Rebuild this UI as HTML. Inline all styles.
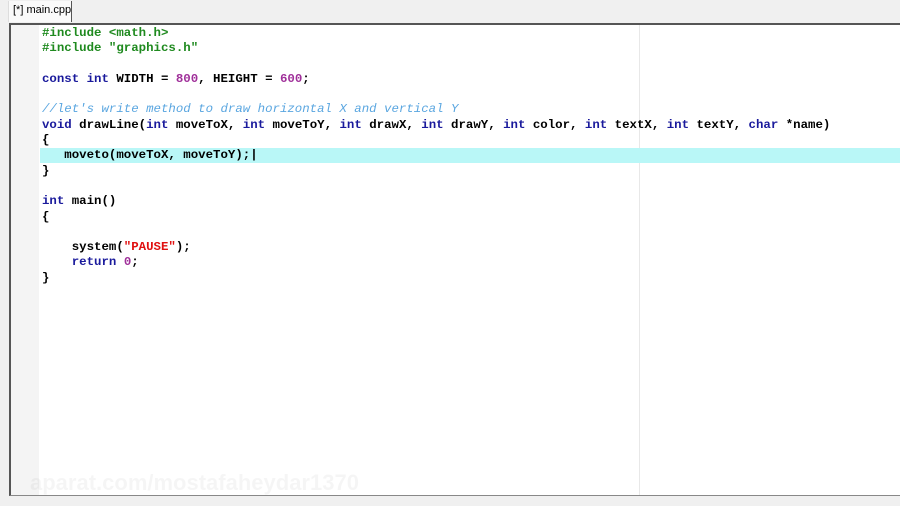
<!DOCTYPE html>
<html><head><style>
body{margin:0;width:900px;height:506px;background:#f0f0f0;position:relative;overflow:hidden;font-family:"Liberation Mono",monospace;}
.tab{position:absolute;left:8px;top:1px;height:21px;width:64px;background:#fafafa;border-right:1px solid #555;border-left:1px solid #ddd;font:11px "Liberation Sans",sans-serif;line-height:19px;padding-left:4px;box-sizing:border-box;color:#000;white-space:nowrap}
.ed{position:absolute;left:9px;top:23px;width:900px;height:470px;background:#fff;border-top:2px solid #555;border-left:2px solid #555;border-bottom:1px solid #888}
.gut{position:absolute;left:0;top:0;width:28px;height:100%;background:#f4f4f4}
.margin{position:absolute;left:628px;top:0;height:100%;width:1px;background:#e8e8e8}
.hl{position:absolute;left:29px;top:123px;width:880px;height:15px;background:#b9f7f7}
pre{position:absolute;left:31px;top:1px;margin:0;font:bold 12.4px/15.3px "Liberation Mono",monospace;color:#000}
.k{color:#1a1a9c}.p{color:#1f8a1f}.n{color:#a0309a}.c{color:#5aa6e0;font-style:italic;font-weight:normal}.s{color:#e01010}
.wm{position:absolute;left:30px;top:470px;font:bold 22px "Liberation Sans",sans-serif;color:rgba(0,0,0,0.04)}
.bot{position:absolute;left:0;top:497px;width:900px;height:9px;background:#f0f0f0}
</style></head><body>
<div class="tab">[*] main.cpp</div>
<div class="ed"><div class="gut"></div><div class="margin"></div><div class="hl"></div>
<pre><span class="p">#include &lt;math.h&gt;</span>
<span class="p">#include "graphics.h"</span>

<span class="k">const int</span> WIDTH = <span class="n">800</span>, HEIGHT = <span class="n">600</span>;

<span class="c">//let's write method to draw horizontal X and vertical Y</span>
<span class="k">void</span> drawLine(<span class="k">int</span> moveToX, <span class="k">int</span> moveToY, <span class="k">int</span> drawX, <span class="k">int</span> drawY, <span class="k">int</span> color, <span class="k">int</span> textX, <span class="k">int</span> textY, <span class="k">char</span> *name)
{
   moveto(moveToX, moveToY);|
}

<span class="k">int</span> main()
{

    system(<span class="s">"PAUSE"</span>);
    <span class="k">return</span> <span class="n">0</span>;
}</pre></div>
<div class="wm">aparat.com/mostafaheydar1370</div>
<div class="bot"></div>
</body></html>
